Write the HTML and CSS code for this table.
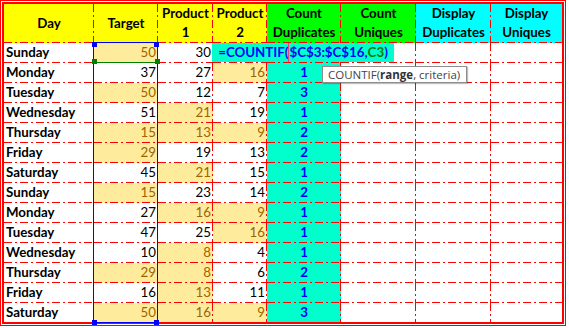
FILE: index.html
```html
<!DOCTYPE html>
<html>
<head>
<meta charset="utf-8">
<link rel="stylesheet" href="styles.css">
</head>
<body>
<div class="frame">
  <div class="sheet">
    <div class="g">
      <div class="hd hy">Day</div>
      <div class="hd hy">Target</div>
      <div class="hd hy">Product<br>1</div>
      <div class="hd hy">Product<br>2</div>
      <div class="hd hg">Count<br>Duplicates</div>
      <div class="hd hg">Count<br>Uniques</div>
      <div class="hd hc">Display<br>Duplicates</div>
      <div class="hd hc">Display<br>Uniques</div>

      <div class="d">Sunday</div><div class="n h">50</div><div class="n">30</div><div class="n"></div><div class="cd"></div><div></div><div></div><div></div>
      <div class="d">Monday</div><div class="n">37</div><div class="n">27</div><div class="n h">16</div><div class="cd">1</div><div></div><div></div><div></div>
      <div class="d">Tuesday</div><div class="n h">50</div><div class="n">12</div><div class="n">7</div><div class="cd">3</div><div></div><div></div><div></div>
      <div class="d">Wednesday</div><div class="n">51</div><div class="n h">21</div><div class="n">19</div><div class="cd">1</div><div></div><div></div><div></div>
      <div class="d">Thursday</div><div class="n h">15</div><div class="n h">13</div><div class="n h">9</div><div class="cd">2</div><div></div><div></div><div></div>
      <div class="d">Friday</div><div class="n h">29</div><div class="n">19</div><div class="n">13</div><div class="cd">2</div><div></div><div></div><div></div>
      <div class="d">Saturday</div><div class="n">45</div><div class="n h">21</div><div class="n">15</div><div class="cd">1</div><div></div><div></div><div></div>
      <div class="d">Sunday</div><div class="n h">15</div><div class="n">23</div><div class="n">14</div><div class="cd">2</div><div></div><div></div><div></div>
      <div class="d">Monday</div><div class="n">27</div><div class="n h">16</div><div class="n h">9</div><div class="cd">1</div><div></div><div></div><div></div>
      <div class="d">Tuesday</div><div class="n">47</div><div class="n">25</div><div class="n h">16</div><div class="cd">1</div><div></div><div></div><div></div>
      <div class="d">Wednesday</div><div class="n">10</div><div class="n h">8</div><div class="n">4</div><div class="cd">1</div><div></div><div></div><div></div>
      <div class="d">Thursday</div><div class="n h">29</div><div class="n h">8</div><div class="n">6</div><div class="cd">2</div><div></div><div></div><div></div>
      <div class="d">Friday</div><div class="n">16</div><div class="n h">13</div><div class="n">11</div><div class="cd">1</div><div></div><div></div><div></div>
      <div class="d">Saturday</div><div class="n h">50</div><div class="n h">16</div><div class="n h">9</div><div class="cd">3</div><div></div><div></div><div></div>
    </div>

    <div class="sel-blue"></div>
    <div class="sel-green"></div>
    <div class="hdl g1"></div>
    <div class="hdl g2"></div>
    <div class="hdl b1"></div>
    <div class="hdl b2"></div>
    <div class="hdl b3"></div>
    <div class="hdl b4"></div>

    <div class="edit"><span>=COUNTIF(</span><span class="rng">$C$3:$C$16</span><span>,</span><span class="c3">C3</span><span>)</span></div>
    <div class="tip">COUNTIF(<b>range</b>, criteria)</div>
  </div>
</div>
</body>
</html>
```
FILE: styles.css
```css
* { box-sizing: border-box; }

body {
  margin: 0;
  background: #fff;
  font-family: Lato, "Liberation Sans", sans-serif;
}

.frame {
  width: 566px;
  height: 326px;
  border: 1px solid #f00;
  padding: 1px;
  background: #fff;
}

.sheet {
  position: relative;
  width: 562px;
  height: 322px;
  border: 2px solid #f00;
}

.g {
  --hline: repeating-linear-gradient(90deg, #f00 0 8px, transparent 8px 11px, #f00 11px 13px, transparent 13px 16px);
  --vline: repeating-linear-gradient(180deg, #f00 0 8px, transparent 8px 11px, #f00 11px 13px, transparent 13px 16px);
  display: grid;
  grid-template-columns: 90px 64px 55px 54px 74px 75px 75px 71px;
  grid-template-rows: 39px repeat(13, 20px) 19px;
  font-size: 13.3px;
  line-height: 19px;
  color: #000;
}

.g > div {
  background-color: #fff;
  background-image: var(--hline), var(--vline);
  background-size: 100% 1px, 1px 100%;
  background-position: 0 100%, 100% 0;
  background-repeat: no-repeat;
  white-space: nowrap;
}

.g > div:nth-child(8n) {
  background-image: var(--hline);
  background-size: 100% 1px;
  background-position: 0 100%;
}

.g > div:nth-last-child(-n+8) {
  background-image: var(--vline);
  background-size: 1px 100%;
  background-position: 100% 0;
}

.g > div:last-child {
  background-image: none;
}

.hd {
  display: flex;
  align-items: center;
  justify-content: center;
  text-align: center;
  font-weight: bold;
  padding-bottom: 1px;
}

.g > .hy { background-color: #ffff00; }
.g > .hg { background-color: #00ff00; }
.g > .hc { background-color: #00ffff; }

.d {
  font-weight: bold;
  padding-left: 2px;
}

.n {
  text-align: right;
  padding-right: 2px;
}

.g > .h {
  background-color: #ffeb9c;
  color: #9c6500;
}

.g > .cd {
  background-color: #00ffcc;
  color: #0000ff;
  font-weight: bold;
  text-align: center;
}

.sel-blue {
  position: absolute;
  left: 89px;
  top: 38px;
  width: 65px;
  height: 281px;
  border: 1px solid #0000ff;
}

.sel-green {
  position: absolute;
  left: 89px;
  top: 58px;
  width: 65px;
  height: 1px;
  background: #008000;
}

.hdl {
  position: absolute;
  width: 5px;
  height: 5px;
}

.g1 { left: 88px; top: 55px; background: #008000; }
.g2 { left: 151px; top: 55px; background: #008000; }
.b1 { left: 88px; top: 38px; background: #0000ff; }
.b2 { left: 150px; top: 38px; background: #0000ff; }
.b3 { left: 88px; top: 316px; background: #0000ff; }
.b4 { left: 150px; top: 316px; background: #0000ff; }

.edit {
  position: absolute;
  left: 208px;
  top: 39px;
  width: 182px;
  height: 19px;
  background: #00ffcc;
  display: flex;
  justify-content: center;
  font-size: 13.3px;
  line-height: 19px;
  font-weight: bold;
  color: #0000ff;
  white-space: nowrap;
}

.edit .rng {
  border-left: 1px solid #e0457a;
}

.edit .c3 { color: #008000; }

.tip {
  position: absolute;
  left: 318px;
  top: 62px;
  width: 145px;
  height: 17px;
  border: 1px solid #8c8c8c;
  background: #fff;
  box-shadow: 1px 1px 1px rgba(0, 0, 0, 0.25);
  padding-left: 5px;
  font-family: "Open Sans", "Noto Sans", sans-serif;
  font-size: 11.5px;
  line-height: 15px;
  color: #444;
  white-space: nowrap;
}

.tip b { font-weight: bold; color: #333; }
```
